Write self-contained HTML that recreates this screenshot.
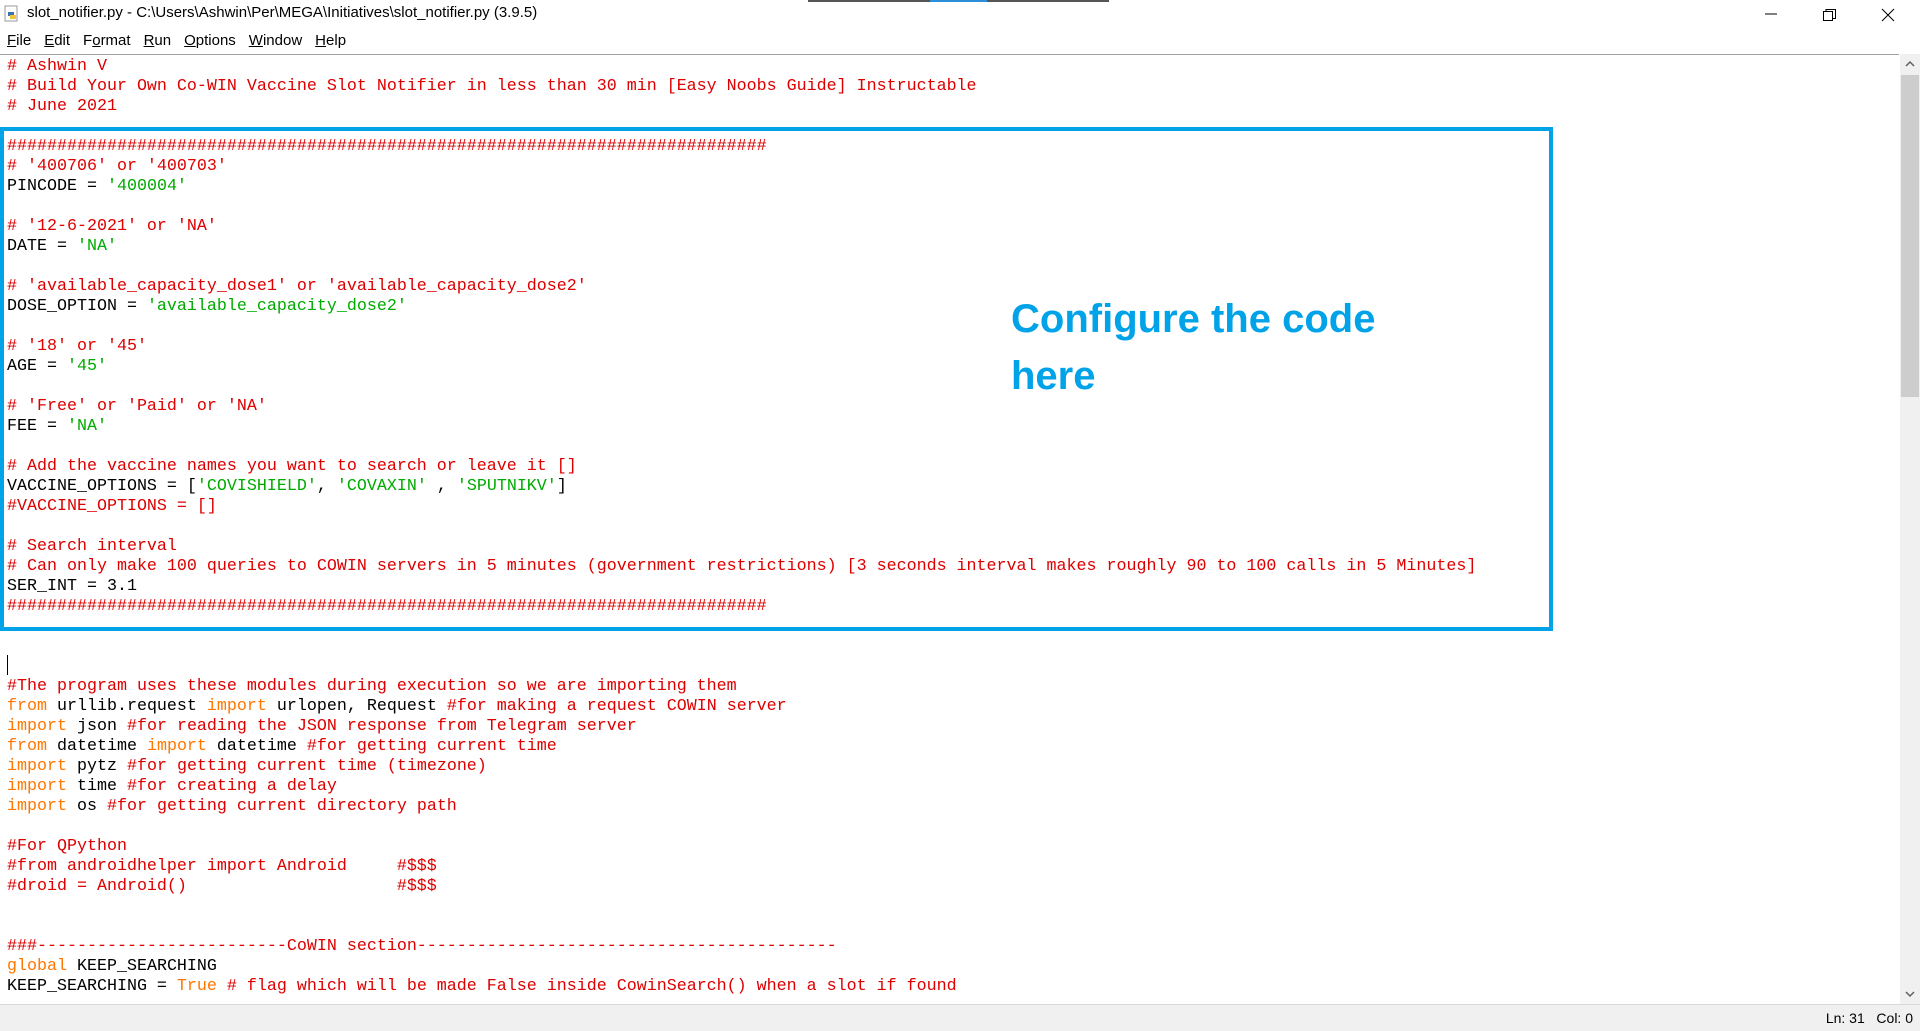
<!DOCTYPE html>
<html><head><meta charset="utf-8">
<style>
body{margin:0;width:1920px;height:1030px;overflow:hidden;background:#fff;position:relative;font-family:"Liberation Sans",sans-serif;}
.title{position:absolute;left:27px;top:4px;font-size:15px;color:#000;}
.menu{position:absolute;left:7px;top:32px;font-size:15px;color:#000;}
.menu span{margin-right:13px;}
.menu u{text-decoration:underline;}
.editor{position:absolute;left:0;top:54px;width:1899px;height:950px;border-top:1px solid #a0a0a0;overflow:hidden;}
pre{margin:0;position:absolute;left:7px;top:2px;font-family:"Liberation Mono",monospace;font-size:16.67px;line-height:20px;color:#000;}
.c{color:#dd0000}.s{color:#00aa00}.k{color:#ff7700}
.box{position:absolute;left:0;top:127px;width:1545px;height:496px;border:4px solid #00a2e8;}
.cfg{position:absolute;left:1011px;top:291px;font-weight:bold;font-size:40px;line-height:57px;color:#00a2e8;}
.sb{position:absolute;left:1900px;top:54px;width:20px;height:950px;background:#f0f0f0;}
.thumb{position:absolute;left:1901px;top:75px;width:18px;height:322px;background:#cdcdcd;}
.status{position:absolute;left:0;top:1004px;width:1920px;height:26px;background:#f0f0f0;border-top:1px solid #d8d8d8;}
.cur{position:absolute;left:7px;top:655px;width:1px;height:20px;background:#000;}
</style></head><body>
<div style="position:absolute;left:808px;top:0;width:301px;height:2px;background:#555"></div>
<div style="position:absolute;left:930px;top:0;width:57px;height:2px;background:#2a8fd8"></div>
<svg style="position:absolute;left:4px;top:5px" width="16" height="18"><rect x="1" y="1" width="12" height="15" fill="#fff" stroke="#999"/><rect x="4" y="7" width="6" height="4" fill="#3a74b0"/><rect x="6" y="10" width="6" height="4" fill="#f2c43a"/></svg>
<div class="title">slot_notifier.py - C:\Users\Ashwin\Per\MEGA\Initiatives\slot_notifier.py (3.9.5)</div>
<svg style="position:absolute;left:1760px;top:6px" width="160" height="20"><line x1="5" y1="8" x2="17" y2="8" stroke="#000"/><rect x="63.5" y="5.5" width="9" height="9" fill="none" stroke="#000"/><path d="M66 5.5V3.5H75.5V12.5H72.5" fill="none" stroke="#000"/><path d="M122 3L134 15M134 3L122 15" stroke="#000"/></svg>
<div class="menu"><span><u>F</u>ile</span><span><u>E</u>dit</span><span>F<u>o</u>rmat</span><span><u>R</u>un</span><span><u>O</u>ptions</span><span><u>W</u>indow</span><span><u>H</u>elp</span></div>
<div class="editor">
<pre><span class="c"># Ashwin V
# Build Your Own Co-WIN Vaccine Slot Notifier in less than 30 min [Easy Noobs Guide] Instructable
# June 2021</span>

<span class="c">############################################################################</span>
<span class="c"># '400706' or '400703'</span>
PINCODE = <span class="s">'400004'</span>

<span class="c"># '12-6-2021' or 'NA'</span>
DATE = <span class="s">'NA'</span>

<span class="c"># 'available_capacity_dose1' or 'available_capacity_dose2'</span>
DOSE_OPTION = <span class="s">'available_capacity_dose2'</span>

<span class="c"># '18' or '45'</span>
AGE = <span class="s">'45'</span>

<span class="c"># 'Free' or 'Paid' or 'NA'</span>
FEE = <span class="s">'NA'</span>

<span class="c"># Add the vaccine names you want to search or leave it []</span>
VACCINE_OPTIONS = [<span class="s">'COVISHIELD'</span>, <span class="s">'COVAXIN'</span> , <span class="s">'SPUTNIKV'</span>]
<span class="c">#VACCINE_OPTIONS = []</span>

<span class="c"># Search interval
# Can only make 100 queries to COWIN servers in 5 minutes (government restrictions) [3 seconds interval makes roughly 90 to 100 calls in 5 Minutes]</span>
SER_INT = 3.1
<span class="c">############################################################################</span>



<span class="c">#The program uses these modules during execution so we are importing them</span>
<span class="k">from</span> urllib.request <span class="k">import</span> urlopen, Request <span class="c">#for making a request COWIN server</span>
<span class="k">import</span> json <span class="c">#for reading the JSON response from Telegram server</span>
<span class="k">from</span> datetime <span class="k">import</span> datetime <span class="c">#for getting current time</span>
<span class="k">import</span> pytz <span class="c">#for getting current time (timezone)</span>
<span class="k">import</span> time <span class="c">#for creating a delay</span>
<span class="k">import</span> os <span class="c">#for getting current directory path</span>

<span class="c">#For QPython
#from androidhelper import Android     #$$$
#droid = Android()                     #$$$</span>


<span class="c">###-------------------------CoWIN section------------------------------------------</span>
<span class="k">global</span> KEEP_SEARCHING
KEEP_SEARCHING = <span class="k">True</span> <span class="c"># flag which will be made False inside CowinSearch() when a slot if found</span>
    ...</pre>
</div>
<div class="cur"></div>
<div class="box"></div>
<div class="cfg">Configure the code<br>here</div>
<div class="sb"></div>
<div class="thumb"></div>
<svg style="position:absolute;left:1900px;top:56px" width="20" height="950"><path d="M6 10L10 6L14 10" fill="none" stroke="#606060" stroke-width="1.5"/><path d="M6 936L10 940L14 936" fill="none" stroke="#606060" stroke-width="1.5"/></svg>
<div class="status"><div style="position:absolute;right:7px;top:5px;font-size:14px;">Ln: 31&nbsp;&nbsp;&nbsp;Col: 0</div></div>
</body></html>
